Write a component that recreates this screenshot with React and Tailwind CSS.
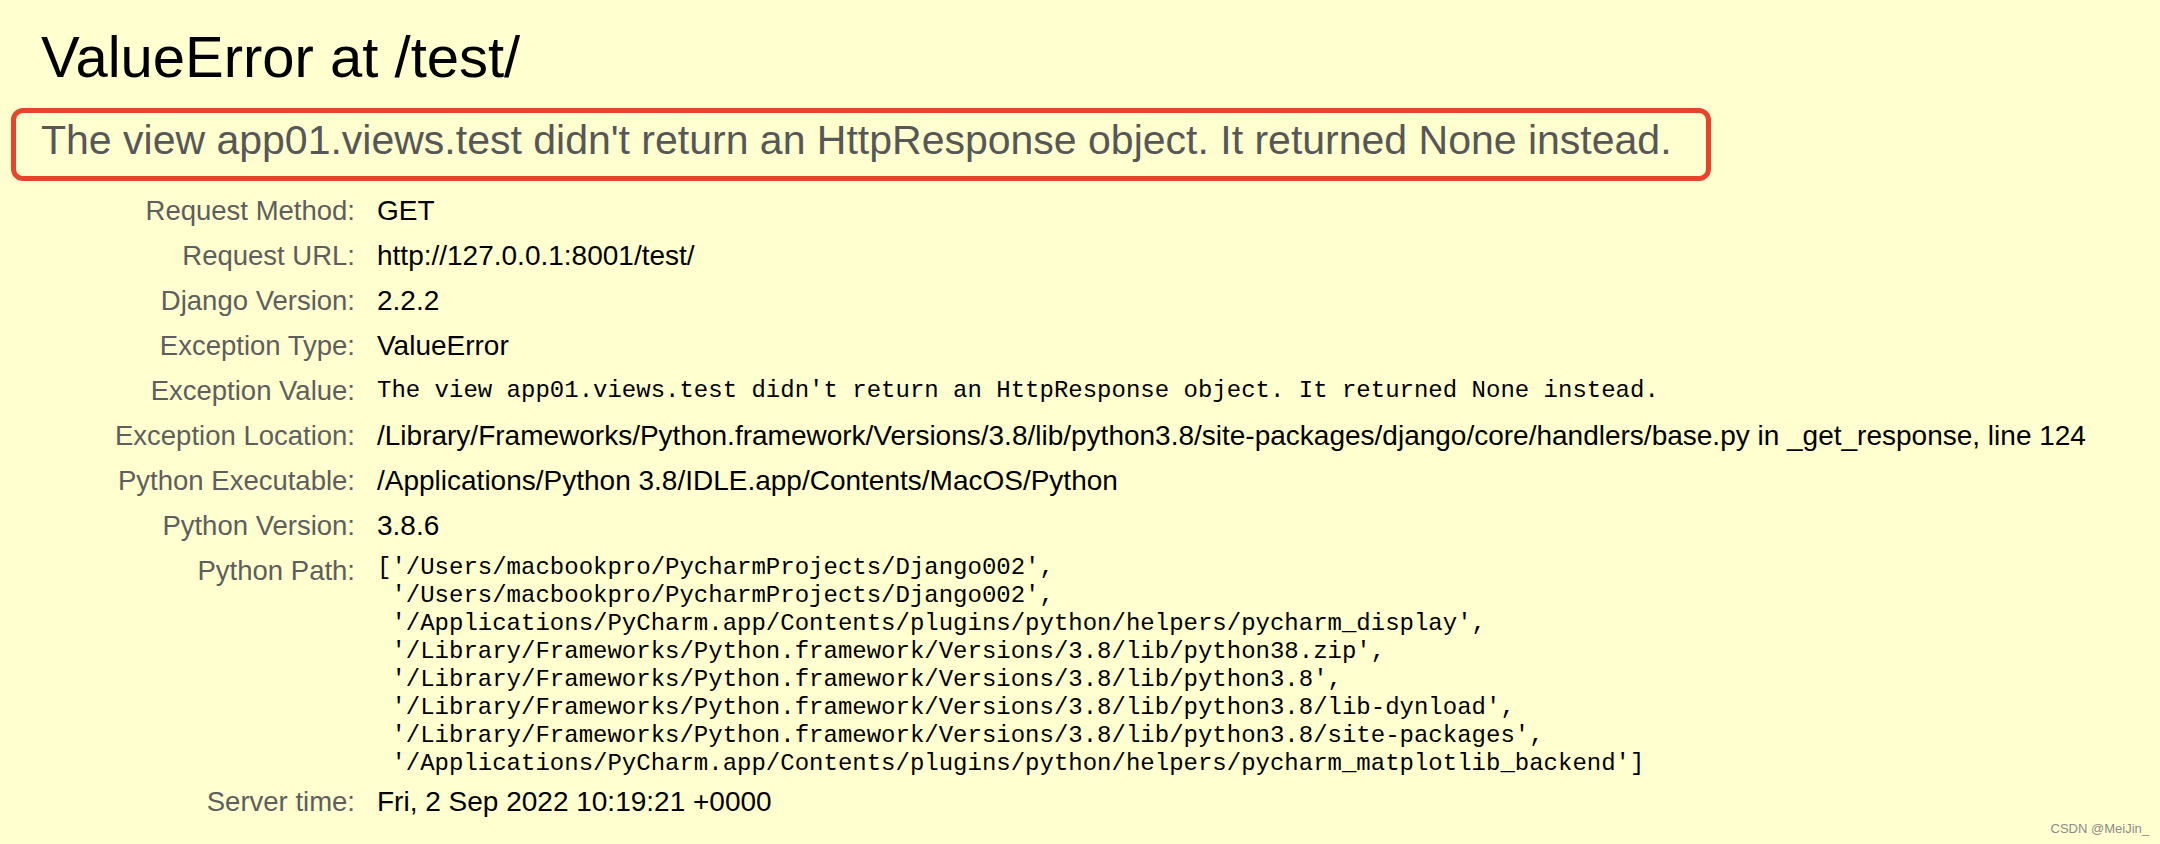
import React from 'react';

const SANS = { fontFamily: '"Liberation Sans", Arial, sans-serif' };

const ROWS = [
  ['Request Method:', 'GET'],
  ['Request URL:', 'http://127.0.0.1:8001/test/'],
  ['Django Version:', '2.2.2'],
  ['Exception Type:', 'ValueError'],
  ['Exception Value:', "The view app01.views.test didn't return an HttpResponse object. It returned None instead.", 'mono'],
  ['Exception Location:', '/Library/Frameworks/Python.framework/Versions/3.8/lib/python3.8/site-packages/django/core/handlers/base.py in _get_response, line 124'],
  ['Python Executable:', '/Applications/Python 3.8/IDLE.app/Contents/MacOS/Python'],
  ['Python Version:', '3.8.6'],
];

const PYTHON_PATH = `['/Users/macbookpro/PycharmProjects/Django002',
 '/Users/macbookpro/PycharmProjects/Django002',
 '/Applications/PyCharm.app/Contents/plugins/python/helpers/pycharm_display',
 '/Library/Frameworks/Python.framework/Versions/3.8/lib/python38.zip',
 '/Library/Frameworks/Python.framework/Versions/3.8/lib/python3.8',
 '/Library/Frameworks/Python.framework/Versions/3.8/lib/python3.8/lib-dynload',
 '/Library/Frameworks/Python.framework/Versions/3.8/lib/python3.8/site-packages',
 '/Applications/PyCharm.app/Contents/plugins/python/helpers/pycharm_matplotlib_backend']`;

const MONO = 'font-["Liberation_Mono",monospace] text-[24px]';

const Label = ({ children }) => (
  <div className="text-right text-[27.5px] leading-[45px] text-[#5e5e5e] whitespace-nowrap">{children}</div>
);

export default function App() {
  return (
    <div className="relative min-h-[844px] w-full bg-[#ffffcf] pl-[41px] pt-[24px] text-black" style={SANS}>
      <h1 className="text-[58px] font-normal leading-[1.15]">ValueError at /test/</h1>

      {/* annotated summary line */}
      <div className="ml-[-30px] mt-[17px] h-[73px] w-[1700px] rounded-[12px] border-[5px] border-[#e8442c] pl-[25px] pt-[4px]">
        <h2 className="text-[41px] font-normal leading-[47px] text-[#575757] whitespace-nowrap">
          The view app01.views.test didn't return an HttpResponse object. It returned None instead.
        </h2>
      </div>

      <div className="mt-[7px] grid grid-cols-[314px_1fr] gap-x-[22px]">
        {ROWS.map(([label, value, kind]) => (
          <React.Fragment key={label}>
            <Label>{label}</Label>
            {kind === 'mono' ? (
              <div className={`${MONO} leading-[45px] whitespace-nowrap`}>{value}</div>
            ) : (
              <div className="text-[28px] leading-[45px] whitespace-nowrap">{value}</div>
            )}
          </React.Fragment>
        ))}

        <Label>Python Path:</Label>
        <pre className={`${MONO} mt-[6px] mb-[1px] leading-[28px]`}>{PYTHON_PATH}</pre>

        <Label>Server time:</Label>
        <div className="text-[28px] leading-[45px] whitespace-nowrap">Fri, 2 Sep 2022 10:19:21 +0000</div>
      </div>

      <span className="absolute bottom-[6px] right-[11px] text-[13px] text-[#8c8c8c]">CSDN @MeiJin_</span>
    </div>
  );
}
